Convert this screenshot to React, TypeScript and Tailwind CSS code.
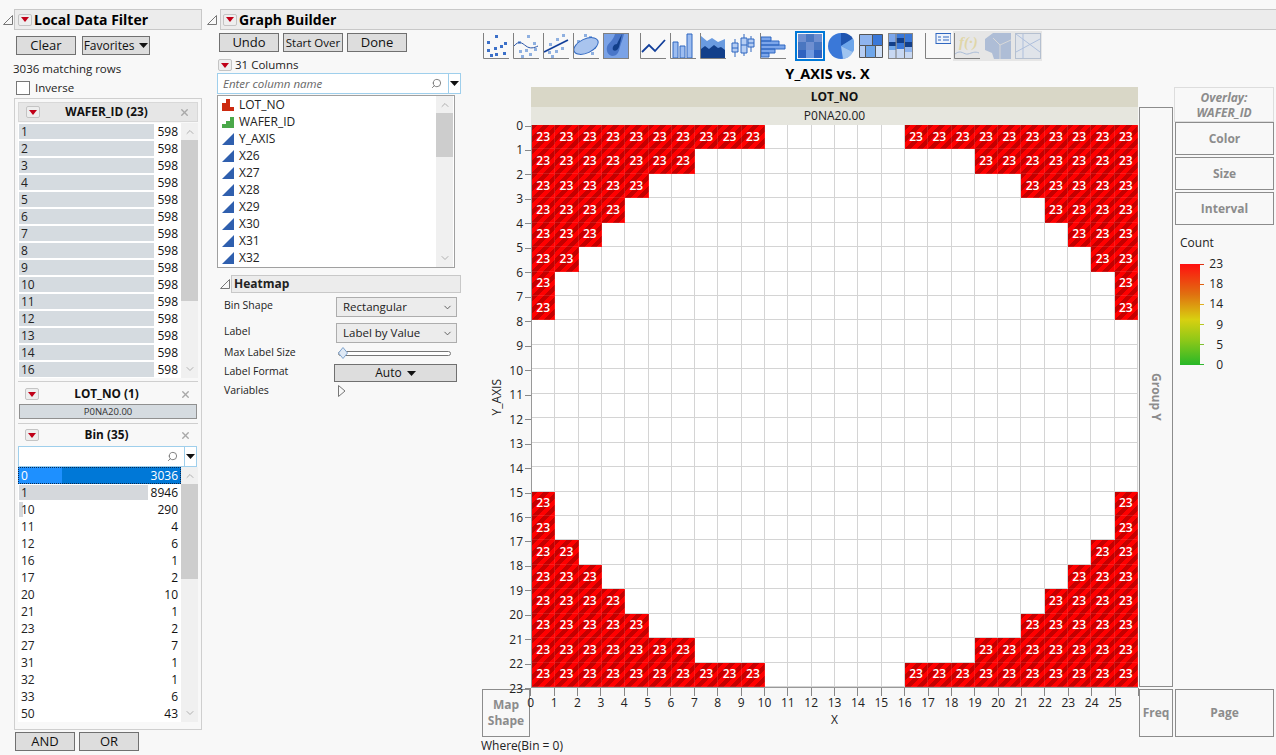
import { Search, ChevronDown, ChevronUp, X as XIcon } from 'lucide-react';
import type { ReactNode } from 'react';

const RedBtn = () => (
  <span className="w-[14px] h-[12px] shrink-0 rounded-[2px] border border-[#c4c4c4] bg-[#eeeeee] flex items-center justify-center">
    <svg width="8" height="5" viewBox="0 0 8 5"><polygon points="0,0 8,0 4,5" fill="#c00018" /></svg>
  </span>
);
const Disclosure = () => (
  <svg width="10" height="10" viewBox="0 0 10 10" className="shrink-0"><polygon points="9.5,0.5 9.5,9.5 0.5,9.5" fill="#f8f8f8" stroke="#777" /></svg>
);
const Btn = ({ w, size = 'text-[13px]', children }: { w: string; size?: string; children: ReactNode }) => (
  <button className={`${w} ${size} h-[19px] bg-[#dddddd] border border-[#707070] leading-none whitespace-nowrap text-[#111] flex items-center justify-center`}>{children}</button>
);
const Caret = () => <svg width="9" height="5" viewBox="0 0 9 5"><polygon points="0,0 9,0 4.5,5" fill="#111" /></svg>;

const FilterHead = ({ title }: { title: string }) => (
  <div className="flex items-center h-[18px] px-[7px]">
    <RedBtn />
    <span className="flex-1 text-center font-bold text-[11.8px] text-[#111] pr-[6px]">{title}</span>
    <XIcon size={11} strokeWidth={3} className="text-[#a8a8a8]" />
  </div>
);

const SearchBox = ({ w, placeholder }: { w: string; placeholder?: string }) => (
  <div className={`${w} h-[21px] border border-[#9fcfec] bg-white flex items-center`}>
    <span className="flex-1 pl-[5px] text-[11.5px] italic text-[#666]">{placeholder}</span>
    <Search size={11} className="-scale-x-100 text-[#777] mr-[6px]" />
    <span className="w-[12px] h-full border-l border-[#9fcfec] flex items-center justify-center"><Caret /></span>
  </div>
);

const Scroll = ({ top, height }: { top: string; height: string }) => (
  <div className="w-[17px] h-full bg-[#f0f0f0] flex flex-col items-center relative">
    <ChevronUp size={12} className="text-[#b0b0b0] mt-[3px]" />
    <div className={`absolute w-full bg-[#cdcdcd] ${top} ${height}`} />
    <ChevronDown size={12} className="text-[#b0b0b0] mt-auto mb-[3px]" />
  </div>
);

const waferIds = ['1', '2', '3', '4', '5', '6', '7', '8', '9', '10', '11', '12', '13', '14', '16'];
const bins = [
  ['1', '8946', 'w-[129px]'], ['10', '290', 'w-[4px]'], ['11', '4', 'w-0'], ['12', '6', 'w-0'], ['16', '1', 'w-0'],
  ['17', '2', 'w-0'], ['20', '10', 'w-0'], ['21', '1', 'w-0'], ['23', '2', 'w-0'], ['27', '7', 'w-0'],
  ['31', '1', 'w-0'], ['32', '1', 'w-0'], ['33', '6', 'w-0'], ['50', '43', 'w-0'],
];

function LeftPanel() {
  return (
    <aside className="w-[205px] shrink-0 pt-[9px]">
      <div className="flex items-center gap-[1px] pl-[3px]">
        <Disclosure />
        <div className="w-[188px] h-[21px] bg-[#ececec] border border-[#c8c8c8] flex items-center gap-[2px] pl-[3px]">
          <RedBtn />
          <span className="font-bold text-[14px] text-black">Local Data Filter</span>
        </div>
      </div>
      <div className="flex gap-[6px] pl-[16px] mt-[6px]">
        <Btn w="w-[60px]">Clear</Btn>
        <Btn w="w-[68px] gap-[5px]" size="text-[12px]">Favorites <Caret /></Btn>
      </div>
      <div className="pl-[13px] mt-[5px] h-[18px] text-[11.5px] leading-[18px] text-[#222]">3036 matching rows</div>
      <div className="flex items-center pl-[16px] mt-[2px] h-[16px]">
        <span className="w-[14px] h-[14px] border border-[#777] bg-white" />
        <span className="ml-[5px] text-[11.5px] text-[#222]">Inverse</span>
      </div>
      <div className="ml-[14px] w-[188px] h-[632px] mt-[2px] border border-[#cfcfcf] pt-[3px] px-[3px]">
        <div className="bg-[#e6e6e6] border border-[#d8d8d8]"><FilterHead title="WAFER_ID (23)" /></div>
        <div className="flex h-[255px] mt-[1px] bg-white">
          <div className="flex-1 pt-[1px] pl-[1px]">
            {waferIds.map(id => (
              <div key={id} className="flex h-[17px] pb-[2px] text-[12px] leading-[15px] text-[#222]">
                <span className="w-[135px] bg-[#d5dbe0] pl-[2px]">{id}</span>
                <span className="flex-1 text-right pr-[3px] text-[#111]">598</span>
              </div>
            ))}
          </div>
          <Scroll top="top-[17px]" height="h-[161px]" />
        </div>
        <div className="border-t border-[#cfcfcf] mt-[3px] pt-[3px]"><FilterHead title="LOT_NO (1)" /></div>
        <div className="mt-[1px] mx-[1px] h-[15px] border border-[#909090] bg-[#d5dbe0] text-center text-[9.5px] leading-[13px] text-[#333]">P0NA20.00</div>
        <div className="border-t border-[#cfcfcf] mt-[4px] pt-[2px]"><FilterHead title="Bin (35)" /></div>
        <SearchBox w="mt-[2px] w-[179px]" />
        <div className="flex h-[255px] bg-white">
          <div className="flex-1">
            <div className="h-[17px] flex bg-[#0078d7] text-white text-[12px] leading-[17px] outline-1 -outline-offset-1 outline-dotted outline-[#0a2a50]">
              <span className="w-[44px] bg-[#1e90ff] pl-[3px]">0</span>
              <span className="flex-1 text-right pr-[3px]">3036</span>
            </div>
            {bins.map(([id, n, w]) => (
              <div key={id} className="relative flex h-[17px] text-[12px] leading-[17px] text-[#222]">
                <span className={`absolute left-[1px] top-[1px] h-[15px] bg-[#d5d8dc] ${w}`} />
                <span className="relative pl-[3px]">{id}</span>
                <span className="relative flex-1 text-right pr-[3px] text-[#111]">{n}</span>
              </div>
            ))}
          </div>
          <Scroll top="top-[17px]" height="h-[95px]" />
        </div>
      </div>
      <div className="flex gap-[4px] pl-[15px] mt-[2px]">
        <Btn w="w-[60px]">AND</Btn>
        <Btn w="w-[60px]">OR</Btn>
      </div>
    </aside>
  );
}

const ColIcon = ({ kind }: { kind: string }) => {
  if (kind === 'n') return <svg width="12" height="12" viewBox="0 0 12 12"><path d="M0 4h4v8H0zM4 0h4v12H4zM8 8h4v4H8z" fill="#cc2a10" /></svg>;
  if (kind === 'o') return <svg width="12" height="12" viewBox="0 0 12 12"><path d="M0 8h4v4H0zM4 5h4v7H4zM8 1h4v11H8z" fill="#4aa84a" /></svg>;
  return <svg width="12" height="12" viewBox="0 0 12 12"><polygon points="12,0 12,12 0,12" fill="#2f5fae" /></svg>;
};

const columns: [string, string][] = [['LOT_NO', 'n'], ['WAFER_ID', 'o'], ['Y_AXIS', 'c'], ['X26', 'c'], ['X27', 'c'], ['X28', 'c'], ['X29', 'c'], ['X30', 'c'], ['X31', 'c'], ['X32', 'c']];

const Select = ({ label }: { label: string }) => (
  <div className="w-[121px] h-[20px] bg-[#ececec] border border-[#adadad] flex items-center pl-[6px] pr-[3px] text-[11.5px] text-[#222]">
    <span className="flex-1">{label}</span>
    <ChevronDown size={11} className="text-[#555]" />
  </div>
);

function Controls() {
  return (
    <div className="w-[262px] shrink-0">
      <div className="flex gap-[4px] mt-[3px]">
        <Btn w="w-[60px]">Undo</Btn>
        <Btn w="w-[60px]" size="text-[11.5px]">Start Over</Btn>
        <Btn w="w-[60px]">Done</Btn>
      </div>
      <div className="flex items-center gap-[3px] -ml-[1px] mt-[6px] h-[14px] text-[11.5px] text-[#222]">
        <RedBtn /> 31 Columns
      </div>
      <SearchBox w="-ml-[2px] mt-[1px] w-[244px]" placeholder="Enter column name" />
      <div className="-ml-[2px] mt-[1px] w-[238px] h-[173px] bg-white border border-[#a0a0a0] flex pr-[1px]">
        <div className="flex-1 pl-[4px]">
          {columns.map(([name, kind]) => (
            <div key={name} className="flex items-center gap-[5px] h-[17px] text-[12px] text-[#222]"><ColIcon kind={kind} />{name}</div>
          ))}
        </div>
        <Scroll top="top-[17px]" height="h-[44px]" />
      </div>
      <div className="flex items-center mt-[7px] ml-[1px]">
        <Disclosure />
        <div className="ml-[1px] w-[230px] h-[18px] bg-[#ececec] border border-[#c8c8c8] pl-[2px] font-bold text-[12px] leading-[15px] text-[#222]">Heatmap</div>
      </div>
      <div className="ml-[5px] mt-[4px] w-[233px] text-[10.5px] text-[#222]">
        <div className="flex items-center justify-between h-[20px]"><span className="-mt-[3px]">Bin Shape</span><Select label="Rectangular" /></div>
        <div className="flex items-center justify-between h-[20px] mt-[6px]"><span className="-mt-[3px]">Label</span><Select label="Label by Value" /></div>
        <div className="flex items-center justify-between h-[18px] mt-[1px]">
          <span>Max Label Size</span>
          <div className="relative w-[113px] h-[5px] border border-[#777] rounded-full bg-white mr-[6px]">
            <svg width="10" height="12" viewBox="0 0 10 12" className="absolute -left-[1px] -top-[5px]"><polygon points="5,0.5 9.5,6 5,11.5 0.5,6" fill="#dfe9f5" stroke="#7fa3cc" /></svg>
          </div>
        </div>
        <div className="flex items-center justify-between h-[18px] mt-[2px]">
          <span className="-mt-[3px]">Label Format</span>
          <button className="w-[123px] h-[18px] bg-[#dddddd] border border-[#707070] text-[12px] text-[#111] flex items-center justify-center gap-[5px]">Auto <Caret /></button>
        </div>
        <div className="flex items-center h-[18px]">
          <span className="w-[114px]">Variables</span>
          <svg width="8" height="12" viewBox="0 0 8 12"><polygon points="0.5,0.5 7,6 0.5,11.5" fill="#f8f8f8" stroke="#777" /></svg>
        </div>
      </div>
    </div>
  );
}

const IconBox = ({ children, className = '', axis = true }: { children: ReactNode; className?: string; axis?: boolean }) => (
  <svg width="26" height="26" viewBox="0 0 26 26" className={`shrink-0 ${className}`}>
    {children}
    {axis && <path d="M0.5 0v25.5H26" fill="none" stroke="#808080" />}
  </svg>
);
const dots = (pts: number[][], fill = '#3c70c8') => pts.map(([x, y], i) => <rect key={i} x={x} y={y} width="3" height="3" fill={fill} />);

function Toolbar() {
  return (
    <div className="flex items-center h-[30px] mt-px pl-[2px]">
      <div className="flex gap-[4px]">
        <IconBox>{dots([[4, 8], [12, 2], [17, 12], [11, 14], [21, 9], [4, 16], [12, 20], [20, 19], [7, 21]])}</IconBox>
        <IconBox>{dots([[5, 8], [14, 2], [20, 9], [6, 17], [12, 16], [16, 20], [8, 22], [21, 15]], '#8fb0e0')}<path d="M1 13c5-6 8-3 12 0s8 2 12 0" fill="none" stroke="#2a55a8" /></IconBox>
        <IconBox>{dots([[6, 10], [13, 5], [19, 1], [5, 18], [12, 17], [18, 14], [8, 22]], '#8fb0e0')}<path d="M1 19L25 7" stroke="#123f9a" strokeWidth="1.6" /></IconBox>
        <IconBox>{dots([[11, 1], [4, 7], [16, 3], [10, 17], [18, 19], [20, 13]], '#8fb0e0')}<ellipse cx="13" cy="13" rx="13" ry="7" transform="rotate(-25 13 13)" fill="#a9c4ee" stroke="#2f67c0" /></IconBox>
        <IconBox axis={false}>
          <rect x="0.5" y="0.5" width="25" height="25" fill="#7aa2e6" stroke="#808080" />
          <path d="M12 1h9c-1 5-3 9-4 13s-2 9-8 9c-4-1-6-5-5-9s6-6 8-13z" fill="#4a76c8" />
          <path d="M19 1c-2 4-4 7-5 10-3 0-5 3-4 6 2 2 5 0 6-3 1-4 2-8 3-13z" fill="#123f8a" />
        </IconBox>
      </div>
      <div className="flex gap-[4px] ml-[11px]">
        <IconBox><path d="M2 19l7-7 6 6L25 7" fill="none" stroke="#123f9a" strokeWidth="1.8" /></IconBox>
        <IconBox><path d="M3 9h5v16H3zM10 13h5v12h-5zM17 1h5v24h-5z" fill="#9dbdf0" stroke="#2f67c0" /></IconBox>
        <IconBox><path d="M1 3l6 5 5-3 6 4 7-3v17H1z" fill="#6a9be0" /><path d="M1 16l4-3 4 3 5-4 4 3 3-1 4 3v8H1z" fill="#123f8a" /></IconBox>
        <IconBox axis={false}><path d="M5 6v18M14 1v22M21 3v16" stroke="#2f67c0" /><path d="M2 10h6v9H2zM11 5h6v15h-6zM18 6h6v8h-6z" fill="#b5cdf3" stroke="#2f67c0" /><path d="M2 15h6M11 12h6M18 10h6" stroke="#2f67c0" /></IconBox>
        <IconBox><path d="M1 4h10v4H1zM1 8h18v4H1zM1 12h24v4H1zM1 16h14v4H1zM1 20h8v4H1z" fill="#7ca6ea" stroke="#2f67c0" /></IconBox>
      </div>
      <div className="flex items-center ml-[9px]">
        <span className="w-[30px] h-[30px] border-2 border-[#0078d7] p-px flex">
          <svg width="24" height="24" viewBox="0 0 24 24">
            <path d="M0 0h8v8H0zM16 0h8v8h-8zM8 8h8v8H8z" fill="#6f8fd0" />
            <path d="M8 0h8v8H8zM0 8h8v8H0zM16 8h8v8h-8z" fill="#4a76c0" />
            <path d="M0 16h8v8H0zM16 16h8v8h-8z" fill="#2f62c0" /><path d="M8 16h8v8H8z" fill="#6f98e0" />
          </svg>
        </span>
        <svg width="26" height="26" viewBox="0 0 26 26" className="ml-[3px]">
          <circle cx="13" cy="13" r="13" fill="#3a78d8" />
          <path d="M13 13L25 5.5A13 13 0 0 0 13 0z" fill="#1f55b0" />
          <path d="M13 13L25 5.5A13 13 0 0 1 25 19z" fill="#6ea6ea" />
          <path d="M13 13L25 19A13 13 0 0 1 15 26z" fill="#9fc4f0" />
        </svg>
        <svg width="24" height="24" viewBox="0 0 24 24" className="ml-[5px]">
          <path d="M0.5 0.5h13v11h-13z" fill="#8fb4ee" stroke="#555" /><path d="M13.5 0.5h10v11h-10z" fill="#3a78d8" stroke="#555" />
          <path d="M0.5 11.5h6v12h-6z" fill="#b5cdf3" stroke="#555" /><path d="M6.5 11.5h10v12h-10z" fill="#6ea6ea" stroke="#555" /><path d="M16.5 11.5h7v12h-7z" fill="#cfe0f8" stroke="#555" />
        </svg>
        <svg width="25" height="26" viewBox="0 0 25 26" className="ml-[5px]">
          <rect width="25" height="26" fill="#c8d8f2" />
          <path d="M0 0h8v9H0z" fill="#7ca6ea" /><path d="M0 9h8v4H0z" fill="#123f8a" /><path d="M0 13h8v4H0z" fill="#6ea6ea" />
          <path d="M8.500 0h8v5h-8z" fill="#3a78d8" /><path d="M8.500 5h8v5h-8z" fill="#123f8a" /><path d="M8.500 10h8v6h-8z" fill="#3a78d8" />
          <path d="M17 0h8v9h-8z" fill="#3a78d8" /><path d="M17 9h8v5h-8z" fill="#123f8a" /><path d="M17 14h8v5h-8z" fill="#8fb4ee" />
          <path d="M8 0v26M16.500 0v26" stroke="#777" /><rect x="0.5" y="0.5" width="24" height="25" fill="none" stroke="#888" />
        </svg>
      </div>
      <div className="flex items-center ml-[12px]">
        <IconBox><rect x="11" y="0.5" width="15" height="10" fill="#eef3fb" stroke="#2f67c0" /><path d="M13 4h3M13 7h3M18 4h6M18 7h6" stroke="#2f67c0" /></IconBox>
        <div className="flex gap-[4.5px] bg-[#e6e6e6] px-[1px] py-[2px] ml-[2px]">
          <IconBox><text x="5" y="14" fontSize="15" fontStyle="italic" fontWeight="bold" fill="#e0d6a8" fontFamily="Liberation Serif">f(·)</text><path d="M1 21c6-5 9 1 13 0s7-3 11-1" fill="none" stroke="#a9bcd8" /></IconBox>
          <svg width="26" height="26" viewBox="0 0 26 26"><path d="M8 0h18v26H9l-2-6-7-3V6z" fill="#aebdd6" /><path d="M8 5l7 7 11-5M15 12v14" stroke="#d8d8d8" fill="none" /></svg>
          <svg width="26" height="26" viewBox="0 0 26 26"><rect x="0.5" y="0.5" width="25" height="25" fill="#e0e4ea" stroke="#b5c0d0" /><path d="M1 1l24 18M1 19L25 6M8 1v24" stroke="#aebfdc" fill="none" /></svg>
        </div>
      </div>
    </div>
  );
}

const spans: number[] = [10, 7, 5, 4, 3, 2, 1, 1, 0, 0, 0, 0, 0, 0, 0, 1, 1, 2, 3, 4, 5, 7, 10];

function Plot() {
  const cells: ReactNode[] = [];
  spans.forEach((n, r) => {
    for (let c = 0; c < 26; c++) {
      const on = c < n || c >= 26 - n;
      cells.push(on
        ? <div key={`${r}-${c}`} className="bg-[linear-gradient(135deg,#c40000_25%,#ff0000_25%_50%,#c40000_50%_75%,#ff0000_75%)] bg-[length:12px_12px] border-r border-b border-white/10 flex items-center justify-center text-white font-semibold text-[12px] leading-none">23</div>
        : <div key={`${r}-${c}`} className="bg-white border-r border-b border-[#d4d4d4]" />);
    }
  });
  return <div className="w-[607px] h-[563px] border-l border-b border-[#999] grid grid-cols-[repeat(26,1fr)] grid-rows-[repeat(23,1fr)]">{cells}</div>;
}

const GhostBox = ({ className, children }: { className: string; children: ReactNode }) => (
  <div className={`border border-[#8c8c8c] flex items-center justify-center font-bold text-[12px] text-[#8c8c8c] ${className}`}>{children}</div>
);

const legend = ['23', '18', '14', '9', '5', '0'];

function Chart() {
  return (
    <div className="flex-1 min-w-0">
      <Toolbar />
      <div className="h-[26px] pl-[36px] w-[657px] flex items-center justify-center font-bold text-[14.5px] text-black">Y_AXIS vs. X</div>
      <div className="flex">
        <div className="w-[50px] shrink-0">
          <div className="flex h-[577px] mt-[32px]">
            <span className="self-center ml-[9px] mb-[20px] [writing-mode:vertical-rl] rotate-180 text-[12px] leading-[14px] text-[#222]">Y_AXIS</span>
            <div className="flex-1 flex flex-col justify-between">
              {Array.from({ length: 24 }, (_, i) => (
                <div key={i} className="h-[14px] flex items-center justify-end gap-[2px] text-[12px] text-[#222]">
                  <span className="relative">{i}</span><span className="w-[6px] h-px bg-[#888]" />
                </div>
              ))}
            </div>
          </div>
          <GhostBox className="-mt-[7px] ml-px w-[48px] h-[48px] text-center leading-[16px]">Map<br />Shape</GhostBox>
          <div className="mt-[1px] h-[16px] text-[12px] leading-[16px] text-[#222] whitespace-nowrap">Where(Bin = 0)</div>
        </div>
        <div className="w-[607px] shrink-0">
          <div className="h-[20px] bg-[#d9d7c7] text-center font-bold text-[12px] leading-[20px] text-[#111]">LOT_NO</div>
          <div className="h-[18px] bg-[#e6e6de] text-center text-[12px] leading-[18px] text-[#222]">P0NA20.00</div>
          <Plot />
          <div className="relative -ml-[12px] w-[631px] flex justify-between">
            {Array.from({ length: 27 }, (_, i) => (
              <div key={i} className="w-[24px] flex flex-col items-center text-[12px] leading-[14px] text-[#222]">
                <span className="w-px h-[8px] bg-[#888]" />
                <span>{i < 26 ? i : ''}</span>
              </div>
            ))}
          </div>
          <div className="text-center text-[12px] leading-[14px] text-[#222] mt-[3px]">X</div>
        </div>
        <div className="w-[34px] shrink-0 ml-px mt-[20px]">
          <GhostBox className="w-full h-[580px] [writing-mode:vertical-rl]">Group Y</GhostBox>
          <GhostBox className="h-[48px] mt-[2px]">Freq</GhostBox>
        </div>
        <div className="w-[99px] shrink-0 ml-[2px] flex flex-col">
          <div className="h-[35px] -ml-px border border-[#dddddd] italic font-bold text-[12px] text-[#8c8c8c] text-center leading-[15px] pt-[2px]">Overlay:<br />WAFER_ID</div>
          <GhostBox className="h-[33px]">Color</GhostBox>
          <GhostBox className="h-[33px] mt-[2px]">Size</GhostBox>
          <GhostBox className="h-[33px] mt-[2px]">Interval</GhostBox>
          <div className="pl-[5px] mt-[10px] text-[12px] leading-[16px] text-[#222]">Count</div>
          <div className="flex pl-[5px] mt-[13px] h-[101px]">
            <div className="w-[20px] bg-[linear-gradient(#ff1010,#e07010_30%,#d8d010_55%,#90c818_75%,#28b828)]" />
            <div className="-my-[7px] flex flex-col justify-between">
              {legend.map((t, i) => (
                <div key={t} className="h-[14px] flex items-center text-[12px] text-[#222]">
                  <span className={`w-[4px] h-px ${['bg-[#e03010]', 'bg-[#e06010]', 'bg-[#e0b020]', 'bg-[#b8c820]', 'bg-[#80c030]', 'bg-[#30b830]'][i]}`} />
                  <span className="w-[19px] text-right">{t}</span>
                </div>
              ))}
            </div>
          </div>
          <GhostBox className="h-[48px] mt-auto mb-[17px]">Page</GhostBox>
        </div>
      </div>
    </div>
  );
}

export default function App() {
  return (
    <div className="w-[1276px] h-[755px] overflow-hidden bg-[#f8f8f8] flex font-['Open_Sans','Noto_Sans',sans-serif]">
      <LeftPanel />
      <div className="flex-1 min-w-0 pt-[9px]">
        <div className="flex items-center gap-[3px] pl-[2px]">
          <Disclosure />
          <div className="flex-1 h-[21px] bg-[#ececec] border-y border-l border-[#c8c8c8] flex items-center gap-[2px] pl-[2px]">
            <RedBtn />
            <span className="font-bold text-[14px] text-black">Graph Builder</span>
          </div>
        </div>
        <div className="flex pl-[14px]">
          <Controls />
          <Chart />
        </div>
      </div>
    </div>
  );
}
